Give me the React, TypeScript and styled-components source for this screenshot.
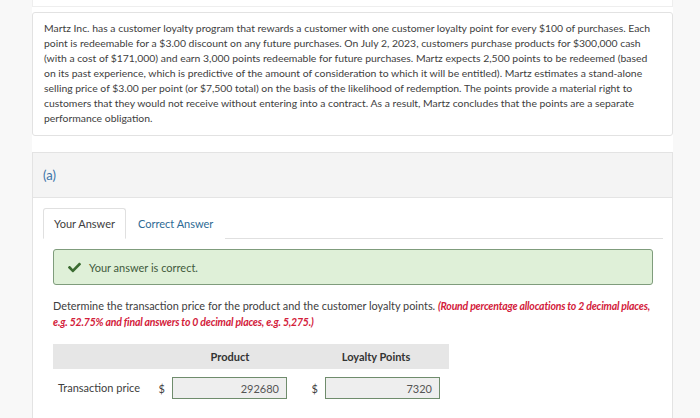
import React from "react";
import styled, { createGlobalStyle } from "styled-components";
import { FaCheck } from "react-icons/fa";

const GlobalStyle = createGlobalStyle`
  html, body {
    margin: 0;
    padding: 0;
    background: #f8f8f8;
  }
  body {
    font-family: Lato, "Open Sans", Arial, sans-serif;
    color: #3a3a3a;
  }
`;

const QUESTION =
  "Martz Inc. has a customer loyalty program that rewards a customer with one customer loyalty point for every $100 of purchases. Each point is redeemable for a $3.00 discount on any future purchases. On July 2, 2023, customers purchase products for $300,000 cash (with a cost of $171,000) and earn 3,000 points redeemable for future purchases. Martz expects 2,500 points to be redeemed (based on its past experience, which is predictive of the amount of consideration to which it will be entitled). Martz estimates a stand-alone selling price of $3.00 per point (or $7,500 total) on the basis of the likelihood of redemption. The points provide a material right to customers that they would not receive without entering into a contract. As a result, Martz concludes that the points are a separate performance obligation.";

const answers = [
  { label: "Product", value: "292680", padRight: 16 },
  { label: "Loyalty Points", value: "7320", padRight: 9 },
];

const App: React.FC = () => {
  return (
    <>
      <GlobalStyle />
      <Column>
        <PrevPanel />
        <QuestionBox>{QUESTION}</QuestionBox>

        <Panel>
          <PanelHeader>(a)</PanelHeader>

          <Tabs>
            <Tab $active>Your Answer</Tab>
            <Tab>Correct Answer</Tab>
          </Tabs>

          <Alert>
            <CheckIcon>
              <FaCheck />
            </CheckIcon>
            <span>Your answer is correct.</span>
          </Alert>

          <Instructions>
            Determine the transaction price for the product and the customer loyalty points.{" "}
            <Hint>
              (Round percentage allocations to 2 decimal places, e.g. 52.75% and final answers to 0 decimal places, e.g.
              5,275.)
            </Hint>
          </Instructions>

          <AnswerTable>
            <HeadCell />
            {answers.map((a) => (
              <HeadCell key={a.label}>{a.label}</HeadCell>
            ))}
            <RowLabel>Transaction price</RowLabel>
            {answers.map((a) => (
              <AmountCell key={a.label} $padRight={a.padRight}>
                <Dollar>$</Dollar>
                <AmountInput>{a.value}</AmountInput>
              </AmountCell>
            ))}
          </AnswerTable>
        </Panel>
      </Column>
    </>
  );
};

export default App;

const Column = styled.div`
  width: 641px;
  margin-left: 32px;
  min-height: 418px;
  background: #ffffff;
`;

const PrevPanel = styled.div`
  height: 7px;
  border: 1px solid #eeeeee;
  border-top: none;
  box-sizing: border-box;
`;

const QuestionBox = styled.div`
  margin-top: 5px;
  padding: 8px 11px 9px;
  border: 1px solid #e2e2e2;
  border-radius: 3px;
  font-size: 10.4px;
  line-height: 15px;
  color: #404040;
`;

const Panel = styled.section`
  margin-top: 16px;
  border: 1px solid #e3e3e3;
  border-bottom: none;
  padding-bottom: 30px;
`;

const PanelHeader = styled.div`
  height: 44px;
  display: flex;
  align-items: center;
  padding-left: 10px;
  background: #f4f4f4;
  border-bottom: 1px solid #e4e4e4;
  color: #3a73a8;
  font-size: 13px;
`;

const Tabs = styled.div`
  display: flex;
  margin: 10px 9px 0 10px;
  border-bottom: 1px solid #e0e0e0;
`;

const Tab = styled.div<{ $active?: boolean }>`
  height: 29px;
  display: flex;
  align-items: center;
  padding: 0 ${({ $active }) => ($active ? "10px" : "11px")};
  margin-bottom: -1px;
  border: 1px solid ${({ $active }) => ($active ? "#e0e0e0" : "transparent")};
  border-bottom-color: ${({ $active }) => ($active ? "#ffffff" : "transparent")};
  border-radius: 3px 3px 0 0;
  background: #ffffff;
  color: ${({ $active }) => ($active ? "#404040" : "#2e6a94")};
  font-size: 11px;
`;

const Alert = styled.div`
  height: 36px;
  box-sizing: border-box;
  margin: 10px 19px 0 20px;
  display: flex;
  align-items: center;
  gap: 8px;
  padding-left: 14px;
  background: #dff0d8;
  border: 1px solid #7f9c7c;
  border-radius: 3px;
  color: #3f5a3c;
  font-size: 11px;
`;

const CheckIcon = styled.span`
  display: inline-flex;
  color: #3b6b31;
  font-size: 13px;
`;

const Instructions = styled.p`
  margin: 13px 20px 0;
  font-size: 10.9px;
  line-height: 15px;
  color: #404040;
`;

const Hint = styled.span`
  color: #d3203a;
  font-weight: 700;
  font-style: italic;
  font-size: 10.5px;
  letter-spacing: -0.2px;
`;

const AnswerTable = styled.div`
  margin: 14px 0 0 20px;
  width: 396px;
  display: grid;
  grid-template-columns: 104px 146px 146px;
`;

const HeadCell = styled.div`
  height: 25px;
  display: flex;
  align-items: center;
  justify-content: center;
  background: #e6e6e6;
  font-size: 11px;
  font-weight: 700;
  color: #333333;
`;

const RowLabel = styled.div`
  padding: 8px 0 0 5px;
  font-size: 11px;
  line-height: 22px;
  color: #404040;
`;

const AmountCell = styled.div<{ $padRight: number }>`
  display: flex;
  align-items: center;
  justify-content: flex-end;
  gap: 7px;
  padding: 8px ${({ $padRight }) => $padRight}px 0 0;
`;

const Dollar = styled.span`
  font-size: 11px;
  color: #404040;
`;

const AmountInput = styled.div`
  width: 115px;
  height: 22px;
  box-sizing: border-box;
  display: flex;
  align-items: center;
  justify-content: flex-end;
  padding-right: 7px;
  background: #eeeeee;
  border: 1px solid #6f8c6c;
  font-size: 11px;
  color: #555555;
`;
